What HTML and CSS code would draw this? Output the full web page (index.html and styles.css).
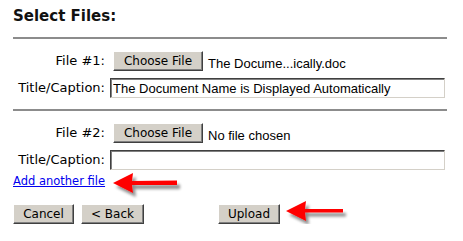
FILE: index.html
```html
<!DOCTYPE html>
<html>
<head>
    <title>Select Files</title>
    <link rel="stylesheet" href="styles.css">
</head>
<body>
    <div class="upload-container">
        <h2>Select Files:</h2>
        <div class="divider divider-top"></div>

        <div class="file-block">
            <div class="input-row">
                <label class="row-label">File #1:</label>
                <button type="button" class="btn btn-choose">Choose File</button>
                <span class="file-name">The Docume...ically.doc</span>
            </div>
            <div class="input-row">
                <label class="row-label" for="caption1">Title/Caption:</label>
                <input type="text" id="caption1" class="caption" value="The Document Name is Displayed Automatically">
            </div>
        </div>

        <div class="divider"></div>

        <div class="file-block last">
            <div class="input-row">
                <label class="row-label">File #2:</label>
                <button type="button" class="btn btn-choose">Choose File</button>
                <span class="file-name">No file chosen</span>
            </div>
            <div class="input-row">
                <label class="row-label" for="caption2">Title/Caption:</label>
                <input type="text" id="caption2" class="caption" value="">
            </div>
        </div>

        <div class="link-row">
            <a href="#" class="add-link">Add another file</a>
            <svg class="arrow arrow-link" width="72" height="30" viewBox="0 0 72 30">
                <defs>
                    <filter id="shadow1" x="-20%" y="-40%" width="150%" height="200%">
                        <feGaussianBlur in="SourceAlpha" stdDeviation="1.6"/>
                        <feOffset dx="3" dy="4"/>
                        <feComponentTransfer><feFuncA type="linear" slope="0.45"/></feComponentTransfer>
                        <feMerge><feMergeNode/><feMergeNode in="SourceGraphic"/></feMerge>
                    </filter>
                </defs>
                <path d="M1 12 L21 2 L20 10 L65 9.5 L65 14 L20 14 L21 22 Z" fill="#ff0000" filter="url(#shadow1)"/>
            </svg>
        </div>

        <div class="actions">
            <button type="button" class="btn btn-cancel">Cancel</button>
            <button type="button" class="btn btn-back">&lt; Back</button>
            <button type="button" class="btn btn-upload">Upload</button>
            <svg class="arrow arrow-upload" width="66" height="30" viewBox="0 0 66 30">
                <defs>
                    <filter id="shadow2" x="-20%" y="-40%" width="150%" height="200%">
                        <feGaussianBlur in="SourceAlpha" stdDeviation="1.6"/>
                        <feOffset dx="3" dy="4"/>
                        <feComponentTransfer><feFuncA type="linear" slope="0.45"/></feComponentTransfer>
                        <feMerge><feMergeNode/><feMergeNode in="SourceGraphic"/></feMerge>
                    </filter>
                </defs>
                <path d="M1 11 L21 1 L20 9 L58 9 L58 12.5 L20 12.5 L21 21 Z" fill="#ff0000" filter="url(#shadow2)"/>
            </svg>
        </div>
    </div>
</body>
</html>
```

FILE: styles.css
```css
body {
    margin: 0;
    background-color: #ffffff;
    font-family: "DejaVu Sans", sans-serif;
    font-size: 12px;
    color: #000000;
}

.upload-container {
    width: 434px;
    padding: 5px 0 0 13px;
}

.upload-container h2 {
    margin: 0;
    font-size: 15px;
    font-weight: bold;
    height: 22px;
    line-height: 22px;
    color: #111111;
}

.divider {
    height: 2px;
    background-color: #8c8c8c;
}

.divider-top {
    margin-top: 10px;
}

.file-block {
    padding: 12px 0 11px;
}

.file-block.last {
    padding-bottom: 0;
}

.input-row {
    display: flex;
    align-items: center;
}

.input-row + .input-row {
    margin-top: 7px;
}

.row-label {
    width: 92px;
    text-align: right;
    flex-shrink: 0;
    margin-right: 8px;
    line-height: 20px;
    font-size: 13px;
}

.btn {
    font-family: "DejaVu Sans", sans-serif;
    font-size: 12px;
    height: 20px;
    padding: 0;
    background-color: #d4d0c8;
    border: 1px solid;
    border-color: #ffffff #404040 #404040 #ffffff;
    box-shadow: inset -1px -1px 0 #808080;
    color: #000000;
    cursor: pointer;
}

.btn-choose {
    width: 90px;
}

.file-name {
    margin-left: 5px;
    padding-top: 4px;
    font-family: "Liberation Sans", Arial, sans-serif;
    font-size: 13px;
}

.caption {
    flex: 1;
    height: 20px;
    box-sizing: border-box;
    margin: 0 2px 0 -3px;
    padding: 1px 2px;
    font-family: "Liberation Sans", Arial, sans-serif;
    font-size: 13px;
    border: 1px solid;
    border-color: #404040 #d4d0c8 #d4d0c8 #404040;
    box-shadow: inset 1px 1px 0 #808080;
}

.link-row {
    position: relative;
    margin-top: 3px;
    height: 16px;
    line-height: 16px;
}

.add-link {
    color: #0000ee;
    font-size: 11.5px;
}

.arrow {
    position: absolute;
}

.arrow-link {
    left: 99px;
    top: -2px;
}

.actions {
    position: relative;
    display: flex;
    align-items: center;
    margin-top: 15px;
}

.btn-cancel {
    width: 61px;
}

.btn-back {
    width: 63px;
    margin-left: 7px;
}

.btn-upload {
    width: 62px;
    margin-left: 74px;
}

.arrow-upload {
    left: 272px;
    top: -4px;
}
```
